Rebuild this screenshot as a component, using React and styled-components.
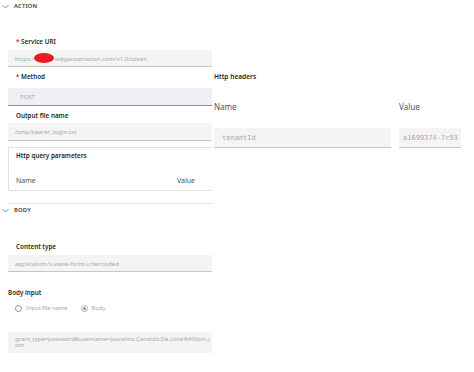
import styled, { createGlobalStyle } from "styled-components";

const GlobalStyle = createGlobalStyle`
  body {
    margin: 0;
    background: #ffffff;
    font-family: "Noto Sans", "Open Sans", sans-serif;
    color: #161616;
  }
`;

const Chevron = () => (
  <svg width="7" height="5" viewBox="0 0 7 5">
    <path d="M0.5 1 L3.5 4 L6.5 1" fill="none" stroke="#6f6f6f" strokeWidth="0.8" />
  </svg>
);

const App = () => {
  return (
    <Page>
      <GlobalStyle />
      <SectionHeader>
        <Chevron />
        <span>ACTION</span>
      </SectionHeader>
      <Columns>
        <LeftCol>
          <Label $top={25}>
            <Req>*</Req> Service URI
          </Label>
          <Input $top={3}>
            https:/<Redact />wdgautomation.com/v1.0/token
          </Input>
          <Label $top={5}>
            <Req>*</Req> Method
          </Label>
          <Input $top={6} $height={17} $tint="#eef0f6" $line="#8d8d8d" $pad={12}>
            POST
          </Input>
          <Label $top={5}>Output file name</Label>
          <Input $top={2} $height={17}>
            /tmp/bearer_login.txt
          </Input>
          <QueryBox>
            <BoxTitle>Http query parameters</BoxTitle>
            <BoxHeads>
              <span>Name</span>
              <span>Value</span>
            </BoxHeads>
          </QueryBox>
          <Divider />
        </LeftCol>
        <RightCol>
          <PanelTitle>Http headers</PanelTitle>
          <HeaderGrid>
            <ColHead>Name</ColHead>
            <ColHead>Value</ColHead>
            <MonoInput>tenantId</MonoInput>
            <MonoInput $pad={4}>a1699374-7c93</MonoInput>
          </HeaderGrid>
        </RightCol>
      </Columns>
      <SectionHeader>
        <Chevron />
        <span>BODY</span>
      </SectionHeader>
      <BodyCol>
        <Label $top={26}>Content type</Label>
        <Input $top={3}>application/x-www-form-urlencoded</Input>
        <Label $top={16} $indent={0}>
          Body input
        </Label>
        <RadioRow>
          <RadioItem>
            <Radio />
            Input file name
          </RadioItem>
          <RadioItem>
            <Radio $checked />
            Body
          </RadioItem>
        </RadioRow>
        <TextArea>
          grant_type=password&amp;username=Juscelino.Candido.De.Lima%40ibm.com
        </TextArea>
      </BodyCol>
    </Page>
  );
};

export default App;

const Page = styled.div`
  width: 474px;
  height: 372px;
  overflow: hidden;
`;

const SectionHeader = styled.div`
  display: flex;
  align-items: center;
  gap: 5px;
  height: 12px;
  padding-left: 2px;
  font-size: 5.8px;
  font-weight: 600;
  letter-spacing: 0.2px;
  color: #393939;
  line-height: 12px;
`;

const Columns = styled.div`
  display: flex;
  gap: 2px;
`;

const LeftCol = styled.div`
  display: flex;
  flex-direction: column;
  width: 204px;
  margin-left: 8px;
`;

const BodyCol = styled(LeftCol)``;

const RightCol = styled.div`
  display: flex;
  flex-direction: column;
  padding-top: 60px;
`;

const Label = styled.div`
  margin-top: ${(p) => p.$top || 0}px;
  padding-left: ${(p) => (p.$indent ?? 8)}px;
  height: 10px;
  line-height: 10px;
  font-size: 6.3px;
  font-weight: 600;
  color: #262626;
`;

const Req = styled.span`
  color: #da1e28;
`;

const Input = styled.div`
  margin-top: ${(p) => p.$top || 0}px;
  height: ${(p) => p.$height || 16}px;
  display: flex;
  align-items: center;
  padding-left: ${(p) => p.$pad || 7}px;
  background: ${(p) => p.$tint || "#f4f4f4"};
  border-bottom: 1px solid ${(p) => p.$line || "#c6c6c6"};
  font-size: 6.1px;
  color: #a8a8a8;
  white-space: nowrap;
  overflow: hidden;
`;

const Redact = styled.span`
  display: inline-block;
  width: 20px;
  height: 10px;
  margin: 0 1px 0 0;
  border-radius: 50%;
  background: #e81c24;
`;

const QueryBox = styled.div`
  margin-top: 6px;
  border: 1px solid #e0e0e0;
  border-right: none;
  display: flex;
  flex-direction: column;
  padding: 3px 0 0 7px;
  box-sizing: border-box;
  height: 44px;
`;

const BoxTitle = styled.div`
  line-height: 10px;
  font-size: 6.3px;
  font-weight: 600;
  color: #262626;
`;

const BoxHeads = styled.div`
  display: flex;
  justify-content: space-between;
  margin-top: 15px;
  padding-right: 17px;
  line-height: 10px;
  font-size: 7px;
  color: #525252;
`;

const Divider = styled.div`
  margin-top: 12px;
  height: 1px;
  background: #e8e8e8;
`;

const PanelTitle = styled.div`
  line-height: 10px;
  font-size: 6.6px;
  font-weight: 600;
  color: #262626;
`;

const HeaderGrid = styled.div`
  display: grid;
  grid-template-columns: 177px 62px;
  column-gap: 8px;
  row-gap: 15px;
  margin-top: 19px;
`;

const ColHead = styled.div`
  line-height: 12px;
  font-size: 8px;
  color: #525252;
`;

const MonoInput = styled.div`
  height: 19px;
  display: flex;
  align-items: center;
  padding-left: ${(p) => p.$pad || 8}px;
  background: #f4f4f4;
  border-bottom: 1px solid #c6c6c6;
  font-family: "DejaVu Sans Mono", "Liberation Mono", monospace;
  font-size: 7px;
  color: #a8a8a8;
  white-space: nowrap;
  overflow: hidden;
`;

const RadioRow = styled.div`
  display: flex;
  gap: 13px;
  margin-top: 4px;
  padding-left: 7px;
  height: 12px;
  align-items: center;
`;

const RadioItem = styled.label`
  display: flex;
  align-items: center;
  gap: 4px;
  font-size: 5.8px;
  color: #a8a8a8;
`;

const Radio = styled.span`
  width: 7px;
  height: 7px;
  border-radius: 50%;
  border: 1px solid ${(p) => (p.$checked ? "#a8b4d8" : "#8d8d8d")};
  box-sizing: border-box;
  display: inline-flex;
  align-items: center;
  justify-content: center;

  &::after {
    content: "";
    width: 3px;
    height: 3px;
    border-radius: 50%;
    background: ${(p) => (p.$checked ? "#7d8fc4" : "transparent")};
  }
`;

const TextArea = styled.div`
  margin-top: 18px;
  height: 21px;
  box-sizing: border-box;
  padding: 4px 0 0 7px;
  background: #f4f4f4;
  font-size: 5.9px;
  line-height: 6px;
  color: #a8a8a8;
  word-break: break-all;
  overflow: hidden;
`;
